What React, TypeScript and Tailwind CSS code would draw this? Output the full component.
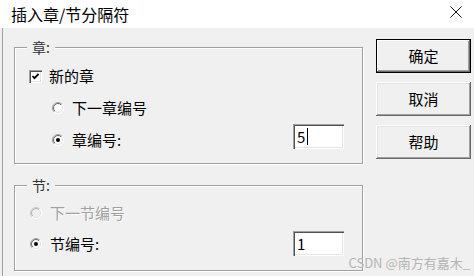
import React from "react";

const sunken =
  "shadow-[inset_1px_1px_0_#a0a0a0,inset_2px_2px_0_#505050,inset_-1px_-1px_0_#ffffff,inset_-2px_-2px_0_#e3e3e3]";

function Radio({ id, checked, disabled }: { id: string; checked?: boolean; disabled?: boolean }) {
  const outerA = disabled ? "#c8c8c8" : "#a0a0a0";
  const innerA = disabled ? "#b0b0b0" : "#606060";
  return (
    <svg width="12" height="12" viewBox="0 0 12 12" className="shrink-0">
      <defs>
        <linearGradient id={`${id}-o`} x1="0" y1="0" x2="1" y2="1">
          <stop offset="0.5" stopColor={outerA} />
          <stop offset="0.5" stopColor="#ffffff" />
        </linearGradient>
        <linearGradient id={`${id}-i`} x1="0" y1="0" x2="1" y2="1">
          <stop offset="0.5" stopColor={innerA} />
          <stop offset="0.5" stopColor="#e3e3e3" />
        </linearGradient>
      </defs>
      <circle cx="6" cy="6" r="5.5" fill="none" stroke={`url(#${id}-o)`} strokeWidth="1" />
      <circle cx="6" cy="6" r="4.5" fill={disabled ? "#f0f0f0" : "#ffffff"} stroke={`url(#${id}-i)`} strokeWidth="1" />
      {checked && <circle cx="6" cy="6" r="2" fill="#000" />}
    </svg>
  );
}

function GroupBox({ label, className, children }: { label: string; className: string; children: React.ReactNode }) {
  return (
    <div
      className={`relative w-[349px] border border-[#a0a0a0] shadow-[inset_1px_1px_0_#ffffff,1px_1px_0_#ffffff] ${className}`}
    >
      <span className="absolute -top-[11px] left-[12px] bg-[#f0f0f0] px-[5px] text-[14px] leading-[20px] text-[#333]">
        {label}
      </span>
      {children}
    </div>
  );
}

function Button({ label, isDefault }: { label: string; isDefault?: boolean }) {
  return (
    <button
      className={`flex h-[34px] w-[95px] items-center justify-center bg-[#f0f0f0] text-[15px] leading-[20px] text-black ${
        isDefault
          ? "border border-black shadow-[inset_-1px_-1px_0_#696969,inset_1px_1px_0_#ffffff,inset_-2px_-2px_0_#a0a0a0]"
          : "shadow-[inset_-1px_-1px_0_#696969,inset_1px_1px_0_#ffffff,inset_-2px_-2px_0_#a0a0a0,inset_2px_2px_0_#e3e3e3]"
      }`}
    >
      {label}
    </button>
  );
}

function NumberField({ value, caret }: { value: string; caret?: boolean }) {
  return (
    <div className={`flex h-[25px] w-[51px] items-center bg-white pl-[4px] text-[15px] leading-[20px] ${sunken}`}>
      <span>{value}</span>
      {caret && <span className="ml-[2px] h-[17px] w-px bg-black" />}
    </div>
  );
}

export default function App() {
  return (
    <div className="relative h-[276px] w-[474px] overflow-hidden bg-[#f0f0f0] font-['Noto_Sans_CJK_SC',sans-serif] text-black">
      <div className="flex h-[28px] items-center justify-between bg-white pl-[11px] pr-[12px]">
        <span className="text-[16px] leading-[22px]">插入章/节分隔符</span>
        <svg width="12" height="12" viewBox="0 0 12 12" className="-mt-[4px]">
          <path d="M0.5 0.5 L11.5 11.5 M11.5 0.5 L0.5 11.5" stroke="#111" strokeWidth="1" />
        </svg>
      </div>

      <div className="ml-[2px] flex h-[248px] border-l border-[#a0a0a0]">
        <div className="flex w-[360px] flex-col gap-[21px] pl-[11px] pt-[19px]">
          <GroupBox label="章:" className="h-[117px] pt-[12px]">
            <div className="flex h-[32px] items-center gap-[7px] pl-[14px] text-[15px] leading-[20px]">
              <div className={`relative h-[13px] w-[13px] shrink-0 bg-white ${sunken}`}>
                <svg width="13" height="13" viewBox="0 0 13 13" className="absolute inset-0">
                  <path d="M3.5 6 L5.5 8.2 L9.6 3.8" fill="none" stroke="#000" strokeWidth="1.8" />
                </svg>
              </div>
              <span>新的章</span>
            </div>
            <div className="flex h-[32px] items-center gap-[8px] pl-[37px] text-[15px] leading-[20px]">
              <Radio id="r1" />
              <span>下一章编号</span>
            </div>
            <div className="flex h-[32px] items-start pl-[37px] pr-[18px] text-[15px] leading-[20px]">
              <div className="mt-[6px] flex h-[20px] items-center gap-[8px]">
                <Radio id="r2" checked />
                <span>章编号:</span>
              </div>
              <div className="ml-auto">
                <NumberField value="5" caret />
              </div>
            </div>
          </GroupBox>

          <GroupBox label="节:" className="h-[86px] pt-[11px]">
            <div className="flex h-[31px] items-center gap-[8px] pl-[15px] text-[15px] leading-[20px] text-[#a0a0a0]">
              <Radio id="r3" disabled />
              <span className="[text-shadow:1px_1px_0_#ffffff]">下一节编号</span>
            </div>
            <div className="flex h-[31px] items-center gap-[8px] pl-[15px] pr-[18px] text-[15px] leading-[20px]">
              <Radio id="r4" checked />
              <span>节编号:</span>
              <div className="ml-auto">
                <NumberField value="1" />
              </div>
            </div>
          </GroupBox>
        </div>

        <div className="ml-[13px] flex flex-col gap-[9px] pt-[11px]">
          <Button label="确定" isDefault />
          <Button label="取消" />
          <Button label="帮助" />
        </div>
      </div>

      <span className="absolute bottom-[5px] right-[4px] text-[13px] leading-[16px] text-[#b4b4b4]">
        CSDN @南方有嘉木_
      </span>
    </div>
  );
}
